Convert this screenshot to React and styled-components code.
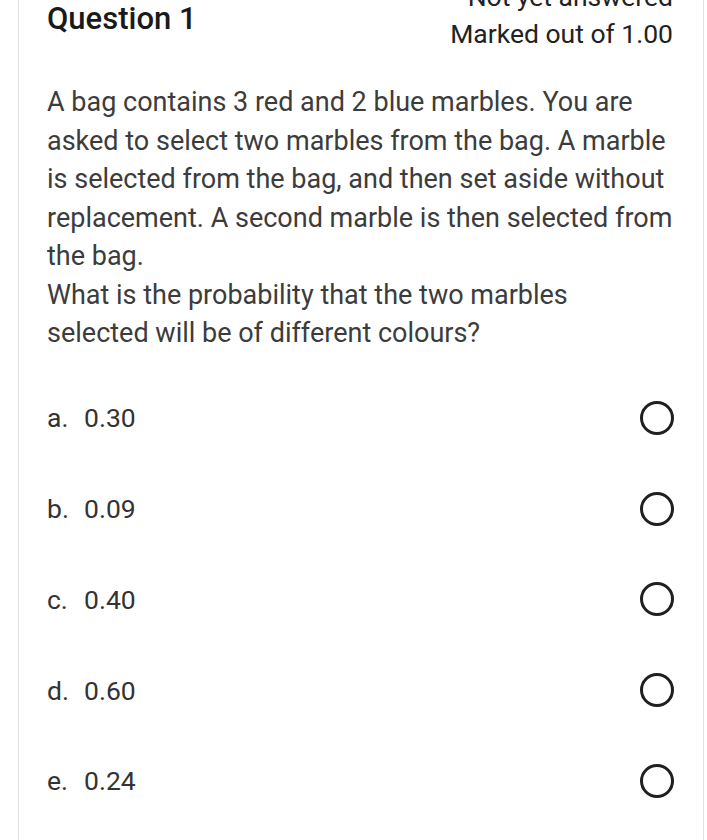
import React from "react";
import styled, { createGlobalStyle } from "styled-components";

const GlobalStyle = createGlobalStyle`
  html, body {
    margin: 0;
    padding: 0;
    background: #fff;
  }
  body {
    font-family: Roboto, "Liberation Sans", sans-serif;
    color: #333;
    overflow: hidden;
  }
`;

const Page = styled.div`
  padding-left: 18px;
  width: 707px;
  box-sizing: border-box;
`;

const Card = styled.div`
  width: 686px;
  box-sizing: border-box;
  margin-top: -19px;
  border-left: 1px solid #e2e2e2;
  border-right: 1px solid #e2e2e2;
  padding: 0 28px 40px 28px;
`;

const Header = styled.div`
  display: flex;
  justify-content: space-between;
  align-items: flex-start;
  padding-right: 2px;
`;

const Title = styled.h3`
  margin: 20px 0 0;
  font-size: 31px;
  line-height: 36px;
  font-weight: 500;
  color: #1a1a1a;
`;

const Info = styled.div`
  margin-top: -2px;
  text-align: right;
  font-size: 26.5px;
  line-height: 36.5px;
  color: #222;
`;

const QuestionText = styled.div`
  margin-top: 31px;
  font-size: 27px;
  line-height: 38.5px;
  color: #3c3c3c;
  p {
    margin: 0;
  }
`;

const Answers = styled.div`
  margin-top: 20px;
  display: flex;
  flex-direction: column;
`;

const Option = styled.label`
  height: 90.75px;
  display: flex;
  align-items: center;
  justify-content: space-between;
  font-size: 26.5px;
  color: #333;
`;

const Letter = styled.span`
  display: inline-block;
  width: 37px;
`;

const Radio = styled.span`
  width: 34px;
  height: 34px;
  box-sizing: border-box;
  border: 3px solid #1f1f1f;
  border-radius: 50%;
  margin-right: 1px;
`;

const options = [
  ["a.", "0.30"],
  ["b.", "0.09"],
  ["c.", "0.40"],
  ["d.", "0.60"],
  ["e.", "0.24"],
];

export default function App() {
  return (
    <Page>
      <GlobalStyle />
      <Card>
        <Header>
          <Title>Question 1</Title>
          <Info>
            <div>Not yet answered</div>
            <div>Marked out of 1.00</div>
          </Info>
        </Header>
        <QuestionText>
          <p>
            A bag contains 3 red and 2 blue marbles. You are asked to select two marbles from the bag. A marble is
            selected from the bag, and then set aside without replacement. A second marble is then selected from the
            bag.
          </p>
          <p>What is the probability that the two marbles selected will be of different colours?</p>
        </QuestionText>
        <Answers>
          {options.map(([letter, value]) => (
            <Option key={letter}>
              <span>
                <Letter>{letter}</Letter>
                {value}
              </span>
              <Radio />
            </Option>
          ))}
        </Answers>
      </Card>
    </Page>
  );
}
